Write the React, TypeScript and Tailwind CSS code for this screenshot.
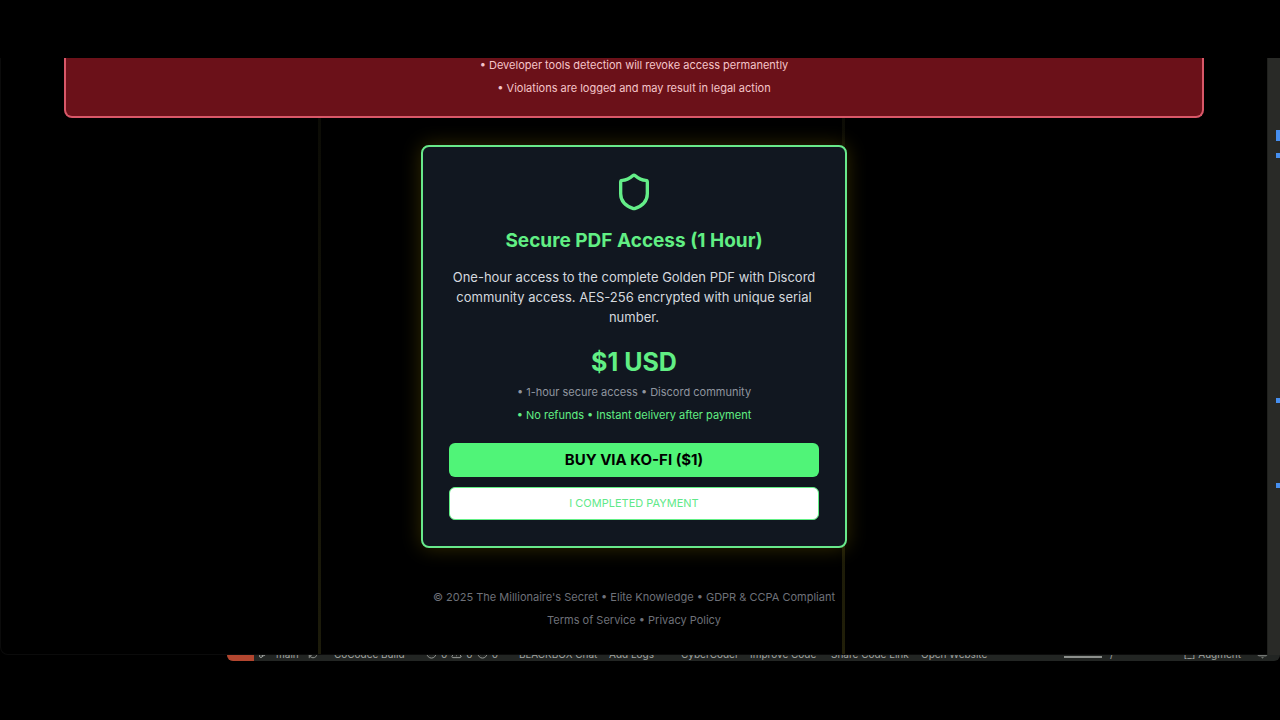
import { Bell, CircleX, GitBranch, RefreshCw, Shield, TriangleAlert } from 'lucide-react';

const warnings = [
    'Developer tools detection will revoke access permanently',
    'Violations are logged and may result in legal action',
];

// Spacing before each change marker in the editor ruler
const rulerMarks = [
    { margin: 'mt-[72px]', height: 'h-[11px]' },
    { margin: 'mt-3', height: 'h-[5px]' },
    { margin: 'mt-60', height: 'h-[5px]' },
    { margin: 'mt-20', height: 'h-[5px]' },
];

const extensions = [
    { label: 'BLACKBOX Chat', width: 'w-[90px]' },
    { label: 'Add Logs', width: 'w-[72px]' },
    { label: 'CyberCoder', width: 'w-[69px]' },
    { label: 'Improve Code', width: 'w-[81px]' },
    { label: 'Share Code Link', width: 'w-[90px]' },
    { label: 'Open Website', width: 'w-[72px]' },
];

function StatusBar() {
    return (
        <footer className="ml-[227px] h-1.5 flex items-end overflow-hidden rounded-b-lg bg-[#222523] text-[10px] leading-3.5 text-[#a0a3a0] whitespace-nowrap">
            <span className="w-[27px] h-full shrink-0 bg-[#b3462f]" />
            <div className="flex items-end pl-1 w-[265px] shrink-0">
                <GitBranch size={12} className="mb-0.5 mr-1.5" />
                <button type="button" className="w-8 text-left">main</button>
                <RefreshCw size={10} className="mb-0.5 mr-4" />
                <button type="button" className="w-[92px] text-left">CoCodec Build</button>
                <CircleX size={11} className="mb-0.5 mr-1" />0
                <TriangleAlert size={11} className="mb-0.5 mx-1" />0
                <CircleX size={11} className="mb-0.5 mx-1" />0
            </div>
            {extensions.map((item) => (
                <button key={item.label} type="button" className={`${item.width} shrink-0 text-left`}>{item.label}</button>
            ))}
            <div className="ml-auto flex items-end pr-3">
                <span className="mb-[3px] mr-2 w-[38px] border-b-2 border-[#8c8f8c]" />
                <span className="mr-5">/</span>
                <span className="mr-10">—</span>
                <button type="button" className="mr-4">[_] Augment</button>
                <Bell size={11} className="mb-0.5" />
            </div>
        </footer>
    );
}

function AccessCard() {
    return (
        <section className="relative mt-[27px] mx-auto w-full max-w-[426px] flex flex-col items-center px-[26px] pt-[25px] pb-[26px] text-center rounded-lg border-2 border-[#68e98b] bg-[#111720] shadow-[0_0_20px_rgba(255,215,0,0.2)]">
            <Shield size={40} className="text-[#64ed88]" />
            <h2 className="mt-[15px] text-[19px] leading-7 font-bold text-[#61ef84]">Secure PDF Access (1 Hour)</h2>
            <p className="mt-3 text-[13px] leading-5 text-[#d5d9df]">
                One-hour access to the complete Golden PDF with Discord community access. AES-256 encrypted with unique serial number.
            </p>
            <div className="mt-[19px] text-[25px] leading-8 font-bold text-[#61ef84]">$1 USD</div>
            <p className="mt-1.5 text-[11px] leading-4 text-[#8f959f]">• 1-hour secure access • Discord community</p>
            <p className="mt-[7px] text-[11px] leading-4 text-[#61ef84]">• No refunds • Instant delivery after payment</p>
            <button type="button" className="mt-5 w-full h-[34px] rounded-md bg-[#50f478] text-[15px] font-bold text-black">
                BUY VIA KO-FI ($1)
            </button>
            <button type="button" className="mt-2.5 w-full h-[33px] rounded-md border border-[#61ef84] bg-white text-[11px] text-[#61e989]">
                I COMPLETED PAYMENT
            </button>
        </section>
    );
}

export default function App() {
    return (
        <div className="min-h-screen flex flex-col bg-black pt-[58px] pb-[59px] font-['Inter',sans-serif]">
            <div className="flex flex-1">
                <main className="relative flex-1 px-[63px] pb-[25px] overflow-hidden rounded-bl-lg border-b border-l border-[#0b0b0b] bg-black">
                    {/* Background beams */}
                    <div className="absolute inset-y-0 left-1/4 w-[3px] bg-linear-to-b from-[#0a0a05] to-[#1c1b0a]" />
                    <div className="absolute inset-y-0 right-1/3 w-[3px] bg-linear-to-b from-[#0a0a05] to-[#211f09]" />

                    {/* Security notice */}
                    <ul className="relative flex flex-col gap-[9px] pb-[21px] text-center text-[11px] leading-3.5 text-[#f5c5c9] rounded-b-lg border-2 border-t-0 border-[#d95768] bg-[#6b1119]">
                        {warnings.map((w) => <li key={w}>• {w}</li>)}
                    </ul>

                    <AccessCard />

                    <div className="relative mt-[41px] text-center text-[11px] leading-4 text-[#6e7179]">
                        <p>© 2025 The Millionaire's Secret • Elite Knowledge • GDPR &amp; CCPA Compliant</p>
                        <p className="mt-[7px]">
                            <a href="#terms">Terms of Service</a> • <a href="#privacy">Privacy Policy</a>
                        </p>
                    </div>
                </main>

                {/* Editor ruler */}
                <aside className="w-[13px] flex flex-col items-end border-l border-[#20211e] bg-[#292a27]">
                    {rulerMarks.map((m) => <span key={m.margin} className={`w-1 bg-[#468ff0] ${m.margin} ${m.height}`} />)}
                </aside>
            </div>
            <StatusBar />
        </div>
    );
}
